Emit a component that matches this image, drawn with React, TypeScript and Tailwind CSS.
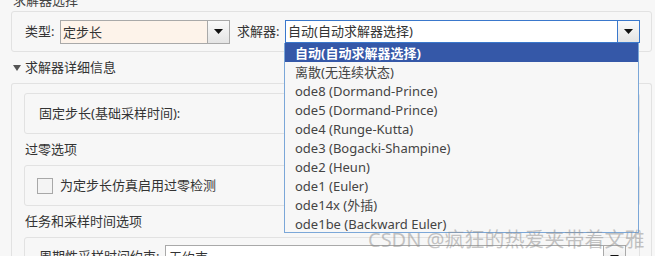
import React from 'react';

const font = { fontFamily: '"Segoe UI", "Noto Sans", "Noto Sans CJK SC", sans-serif' };

const solvers = [
  '自动(自动求解器选择)',
  '离散(无连续状态)',
  'ode8 (Dormand-Prince)',
  'ode5 (Dormand-Prince)',
  'ode4 (Runge-Kutta)',
  'ode3 (Bogacki-Shampine)',
  'ode2 (Heun)',
  'ode1 (Euler)',
  'ode14x (外插)',
  'ode1be (Backward Euler)',
];

const Arrow = () => (
  <svg width="9" height="5" viewBox="0 0 9 5">
    <path d="M0 0h9L4.5 5z" fill="#111" />
  </svg>
);

const DropButton: React.FC<{ className?: string }> = ({ className = '' }) => (
  <div
    className={`flex w-[22px] shrink-0 items-center justify-center self-stretch border-l bg-gradient-to-b from-[#fafafa] to-[#e4e4e4] ${className}`}
  >
    <Arrow />
  </div>
);

const App: React.FC = () => {
  return (
    <div
      className="relative h-[256px] w-[655px] overflow-hidden bg-[#f7f7f7] text-[13px] text-[#333]"
      style={font}
    >
      <div className="px-[11px]">
        <div className="-mt-[10px] h-[21px] pl-[2px] leading-[20px] text-[#444]">求解器选择</div>

        {/* solver selection box */}
        <div className="flex h-[41px] w-[641px] items-center rounded-[3px] border border-[#e2e2e2] pl-[13px]">
          <span className="w-[35px]">类型:</span>
          <div className="flex h-[24px] w-[170px] items-stretch border border-[#a9a9a9] bg-[#fdf3ea]">
            <span className="flex-1 pl-[2px] leading-[22px]">定步长</span>
            <DropButton className="border-[#a9a9a9]" />
          </div>
          <span className="ml-[7px] w-[48px]">求解器:</span>
          <div className="flex h-[23px] w-[355px] items-stretch border border-[#3a78cc] bg-white">
            <span className="flex-1 pl-[2px] leading-[21px]">自动(自动求解器选择)</span>
            <DropButton className="border-[#3a78cc]" />
          </div>
        </div>

        {/* details header */}
        <div className="flex h-[31px] items-center pl-[2px]">
          <svg width="8" height="6" viewBox="0 0 8 6" className="mr-[4px]">
            <path d="M0 0h8L4 6z" fill="#555" />
          </svg>
          <span>求解器详细信息</span>
        </div>

        <div className="h-[200px] w-[641px] rounded-t-[3px] border border-b-0 border-[#e2e2e2] pl-[12px] pr-[11px] pt-[9px]">
          <div className="flex h-[41px] items-center rounded-[3px] border border-[#e2e2e2] pl-[14px]">
            固定步长(基础采样时间):
          </div>
          <div className="flex h-[31px] items-center pl-[1px]">过零选项</div>
          <div className="flex h-[41px] items-center rounded-[3px] border border-[#e2e2e2] pl-[12px]">
            <span className="mr-[7px] h-[16px] w-[16px] border border-[#a8a8a8] bg-[#f4f4f4]" />
            为定步长仿真启用过零检测
          </div>
          <div className="flex h-[31px] items-center pl-[1px]">任务和采样时间选项</div>
          <div className="flex h-[41px] items-start rounded-[3px] border border-[#e2e2e2] pl-[14px] pt-[7px]">
            <span className="w-[126px] leading-[22px]">周期性采样时间约束:</span>
            <div className="flex h-[24px] w-[461px] items-stretch border border-[#a9a9a9] bg-white">
              <span className="flex-1 pl-[3px] leading-[22px]">无约束</span>
              <DropButton className="border-[#a9a9a9]" />
            </div>
          </div>
        </div>
      </div>

      {/* open dropdown list */}
      <div className="absolute left-[284px] top-[43px] h-[190px] w-[355px] border border-t-0 border-[#7ba7d8] bg-[#f7f7f7]">
        {solvers.map((s, i) => (
          <div
            key={s}
            className={
              i === 0
                ? 'h-[19px] bg-[#3558a8] pl-[10px] font-bold leading-[20px] text-white'
                : 'h-[19px] pl-[10px] leading-[21px] text-[#444]'
            }
          >
            {s}
          </div>
        ))}
      </div>

      {/* watermark */}
      <div className="absolute left-[368px] top-[226px] text-[20px] leading-[28px] text-[#8c8c8c]/50">
        CSDN @疯狂的热爱夹带着文雅
      </div>
    </div>
  );
};

export default App;
